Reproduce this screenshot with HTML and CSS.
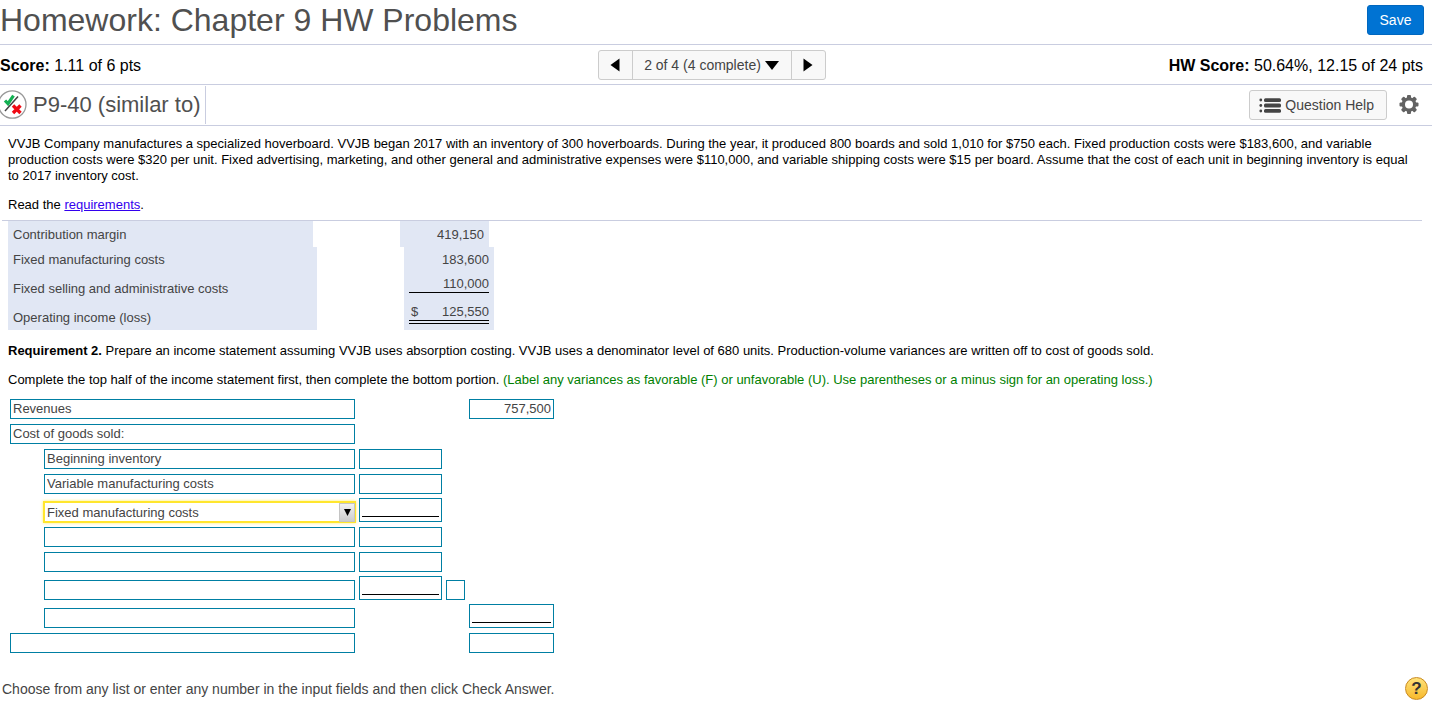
FILE: index.html
```html
<!DOCTYPE html>
<html lang="en">
<head>
<meta charset="utf-8">
<title>Homework: Chapter 9 HW Problems</title>
<link rel="stylesheet" href="styles.css">
</head>
<body>
<header class="title-bar">
  <h1 class="title">Homework: Chapter 9 HW Problems</h1>
  <button class="save" type="button">Save</button>
</header>
<section class="score-bar">
  <p class="score"><b>Score:</b> 1.11 of 6 pts</p>
  <nav class="pager" aria-label="Questions">
    <button class="pager-btn pager-prev" type="button" aria-label="Previous question"><svg width="10" height="14" viewBox="0 0 10 14"><path d="M9.500 0.500v13L0.500 7z"/></svg></button>
    <button class="pager-btn pager-list" type="button">2 of 4 (4 complete)<svg width="14" height="10" viewBox="0 0 14 10"><path d="M0 1h14L7 10z"/></svg></button>
    <button class="pager-btn pager-next" type="button" aria-label="Next question"><svg width="10" height="14" viewBox="0 0 10 14"><path d="M0.500 0.500v13L9.500 7z"/></svg></button>
  </nav>
  <p class="score score-total"><b>HW Score:</b> 50.64%, 12.15 of 24 pts</p>
</section>
<section class="question-bar">
  <div class="question-name">
    <svg class="status" width="27" height="30" viewBox="0 0 27 30" aria-hidden="true">
      <circle cx="12.300" cy="14.500" r="13.700" fill="#fff" stroke="#999" stroke-width="1.300"/>
      <path d="M5 10.500l3 3.200 5.500-8" fill="none" stroke="#14b053" stroke-width="3.200"/>
      <path d="M5 21L18 6.500" stroke="#444" stroke-width="1.500"/>
      <path d="M13 15.500l7.500 7.500M20.500 15.500L13 23" stroke="#f00a14" stroke-width="3.400"/>
    </svg>
    <h2 class="question-title">P9-40 (similar to)</h2>
  </div>
  <div class="question-tools">
    <button class="help" type="button">
      <svg width="22" height="16" viewBox="0 0 22 16" fill="#444" aria-hidden="true">
        <circle cx="1.800" cy="3" r="1.400"/><circle cx="1.800" cy="8.500" r="1.400"/><circle cx="1.800" cy="14" r="1.400"/>
        <rect x="5" y="1.200" width="17" height="3.800" rx="1.500"/><rect x="5" y="6.600" width="17" height="3.800" rx="1.500"/><rect x="5" y="12" width="17" height="3.800" rx="1.500"/>
      </svg>Question Help</button>
    <button class="gear" type="button" aria-label="Settings">
      <svg width="20" height="20" viewBox="0 0 20 20">
        <g fill="#626262"><rect x="8" y="0" width="4" height="19" rx="1"/><rect x="8" y="0" width="4" height="19" rx="1" transform="rotate(45 10 9.500)"/><rect x="8" y="0" width="4" height="19" rx="1" transform="rotate(90 10 9.500)"/><rect x="8" y="0" width="4" height="19" rx="1" transform="rotate(135 10 9.500)"/><circle cx="10" cy="9.500" r="7.300"/></g>
        <circle cx="10" cy="9.500" r="4" fill="#fff"/>
      </svg>
    </button>
  </div>
</section>
<main>
  <section class="problem">
    <p>VVJB Company manufactures a specialized hoverboard. VVJB began 2017 with an inventory of 300 hoverboards. During the year, it produced 800 boards and sold 1,010 for $750 each. Fixed production costs were $183,600, and variable production costs were $320 per unit. Fixed advertising, marketing, and other general and administrative expenses were $110,000, and variable shipping costs were $15 per board. Assume that the cost of each unit in beginning inventory is equal to 2017 inventory cost.</p>
    <p>Read the <a class="link" href="#requirements">requirements</a>.</p>
  </section>
  <section class="work">
    <table class="summary summary-head">
      <tr><th scope="row">Contribution margin</th><td class="blank"></td><td>419,150</td></tr>
    </table>
    <table class="summary summary-body">
      <tr><th scope="row">Fixed manufacturing costs</th><td class="blank"></td><td>183,600</td></tr>
      <tr><th scope="row">Fixed selling and administrative costs</th><td class="blank"></td><td class="subtotal"><div class="amount">110,000</div></td></tr>
      <tr><th scope="row">Operating income (loss)</th><td class="blank"></td><td class="total"><div class="amount"><span>$</span><span>125,550</span></div></td></tr>
    </table>
    <div class="instructions">
      <p><b>Requirement 2.</b> Prepare an income statement assuming VVJB uses absorption costing. VVJB uses a denominator level of 680 units. Production-volume variances are written off to cost of goods sold.</p>
      <p>Complete the top half of the income statement first, then complete the bottom portion. <span class="note">(Label any variances as favorable (F) or unfavorable (U). Use parentheses or a minus sign for an operating loss.)</span></p>
    </div>
    <table class="statement">
      <colgroup><col class="col-label"><col class="col-part"><col class="col-flag"><col class="col-total"></colgroup>
      <tr><td><select class="box" aria-label="Line 1"><option>Revenues</option></select></td><td></td><td></td><td><input class="box number" aria-label="Line 1 total" value="757,500"></td></tr>
      <tr><td><select class="box" aria-label="Line 2"><option>Cost of goods sold:</option></select></td><td></td><td></td><td></td></tr>
      <tr><td class="indent"><select class="box" aria-label="Line 3"><option>Beginning inventory</option></select></td><td><input class="box number" aria-label="Line 3 amount"></td><td></td><td></td></tr>
      <tr><td class="indent"><select class="box" aria-label="Line 4"><option>Variable manufacturing costs</option></select></td><td><input class="box number" aria-label="Line 4 amount"></td><td></td><td></td></tr>
      <tr class="tall"><td class="indent"><div class="active"><select class="box" aria-label="Line 5"><option>Fixed manufacturing costs</option></select><span class="arrow"><svg width="7" height="7" viewBox="0 0 7 7"><path d="M0 0h7L3.500 7z"/></svg></span></div></td><td><div class="ruled"><input class="number" aria-label="Line 5 amount"></div></td><td></td><td></td></tr>
      <tr><td class="indent"><select class="box" aria-label="Line 6"><option></option></select></td><td><input class="box number" aria-label="Line 6 amount"></td><td></td><td></td></tr>
      <tr><td class="indent"><select class="box" aria-label="Line 7"><option></option></select></td><td><input class="box number" aria-label="Line 7 amount"></td><td></td><td></td></tr>
      <tr class="tall"><td class="indent"><select class="box" aria-label="Line 8"><option></option></select></td><td><div class="ruled"><input class="number" aria-label="Line 8 amount"></div></td><td><select class="box" aria-label="Favorable or unfavorable"><option></option></select></td><td></td></tr>
      <tr class="tall"><td class="indent"><select class="box" aria-label="Line 9"><option></option></select></td><td></td><td></td><td><div class="ruled"><input class="number" aria-label="Line 9 total"></div></td></tr>
      <tr><td><select class="box" aria-label="Line 10"><option></option></select></td><td></td><td></td><td><input class="box number" aria-label="Line 10 total"></td></tr>
    </table>
  </section>
</main>
<footer class="footer">
  <p>Choose from any list or enter any number in the input fields and then click Check Answer.</p>
  <button class="hint" type="button" aria-label="Help">?</button>
</footer>
</body>
</html>
```
FILE: styles.css
```css
* { box-sizing: border-box; }
body {
  margin: 0;
  background: #fff;
  color: #000;
  font-family: "Liberation Sans", Arial, sans-serif;
  font-size: 13px;
  line-height: 16px;
}
p, h1, h2 { margin: 0; font-weight: normal; }
button, input, select { font: inherit; color: inherit; margin: 0; }
button { cursor: pointer; }
svg { display: block; }

.title-bar {
  display: flex;
  align-items: center;
  justify-content: space-between;
  padding: 0 8px 4px 0;
  min-height: 45px;
  border-bottom: 1px solid #c9cde0;
}
.title { font-size: 32px; line-height: 40px; color: #505050; }
.save {
  height: 30px;
  width: 57px;
  padding: 0;
  border: 1px solid #0067bf;
  border-radius: 3px;
  background: #0073d3;
  color: #fff;
  font-size: 14px;
}

.score-bar {
  display: grid;
  grid-template-columns: 1fr auto 1fr;
  align-items: center;
  min-height: 40px;
  padding-right: 9px;
  border-bottom: 1px solid #c9cde0;
}
.score { padding-top: 2px; font-size: 16px; line-height: 20px; }
.score-total { text-align: right; }
.pager { display: flex; }
.pager-btn {
  display: flex;
  align-items: center;
  justify-content: center;
  gap: 4px;
  height: 30px;
  width: 35px;
  padding: 0;
  border: 1px solid #ccc;
  background: #f8f8f8;
}
.pager-prev { border-radius: 3px 0 0 3px; }
.pager-next { border-radius: 0 3px 3px 0; }
.pager-list { width: 160px; margin: 0 -1px; color: #444; font-size: 14px; }
.pager-list svg { fill: #000; }

.question-bar {
  display: flex;
  align-items: center;
  justify-content: space-between;
  min-height: 41px;
  border-bottom: 1px solid #c9cde0;
}
.question-name {
  display: flex;
  align-items: center;
  gap: 6px;
  height: 38px;
  padding-right: 5px;
  border-right: 1px solid #c9cde0;
}
.question-title { font-size: 22px; line-height: 28px; color: #505050; }
.question-tools { display: flex; align-items: center; gap: 12px; padding-right: 13px; }
.help {
  display: flex;
  align-items: center;
  gap: 4px;
  height: 30px;
  padding: 0 12px 0 9px;
  border: 1px solid #ccc;
  border-radius: 3px;
  background: #f8f8f8;
  color: #444;
  font-size: 14px;
}
.gear { padding: 0; border: 0; background: none; }

.problem { padding: 10px 16px 7px 8px; }
.problem p + p, .instructions p + p { margin-top: 13px; }
.link { color: #3300ee; }

.work { margin: 0 10px 0 2px; padding-left: 6px; border-top: 1px solid #c9cde0; }

.summary { border-collapse: collapse; table-layout: fixed; color: #444; }
.summary-head { width: 481px; }
.summary-body { width: 486px; }
.summary th, .summary td {
  padding: 6px 5px 4px;
  background: #e1e7f4;
  font-weight: normal;
  vertical-align: bottom;
}
.summary th { text-align: left; }
.summary td { width: 90px; text-align: right; }
.summary-head td { width: 89px; }
.summary-head th { width: 305px; }
.summary-body th { width: 309px; }
.summary .blank { width: 87px; background: none; }
.summary-body th, .summary-body td { padding-top: 5px; }
.amount { display: flex; justify-content: space-between; }
.summary .subtotal { padding: 4px 5px 8px; }
.summary .subtotal .amount { justify-content: flex-end; border-bottom: 1px solid #000; height: 17px; }
.summary .total { padding: 3px 5px 6px; }
.total .amount { border-bottom: 4px double #000; padding-left: 2px; height: 20px; }

.instructions { padding: 13px 0 6px; }
.note { color: #008000; }

.statement { width: 546px; border-collapse: collapse; table-layout: fixed; color: #444; }
.statement td { padding: 5px 0 0 4px; vertical-align: bottom; }
.statement .tall td { padding-top: 4px; }
.statement td:first-child { padding-left: 2px; }
.statement td.indent:first-child { padding-left: 36px; }
.col-label { width: 347px; }
.col-part { width: 87px; }
.col-flag { width: 23px; }
.col-total { width: 89px; }
.box {
  display: block;
  width: 100%;
  height: 20px;
  padding: 0 2px;
  border: 1px solid #007fa3;
  border-radius: 0;
  background: #fff;
  appearance: none;
  outline: 0;
}
.number { text-align: right; }
.box.number { padding-bottom: 2px; }
.ruled { height: 24px; padding: 2px 2px 4px; border: 1px solid #007fa3; }
.ruled input {
  display: block;
  width: 100%;
  height: 16px;
  padding: 0;
  border: 0;
  border-bottom: 1px solid #000;
  background: none;
  outline: 0;
}
.active { position: relative; }
.active .box {
  padding-top: 1px;
  border-color: #ffe62e;
  box-shadow: 0 0 0 1px #ffe62e, 0 0 3px 1px #ffee70;
}
.arrow {
  position: absolute;
  top: 1px;
  right: 0;
  bottom: 0;
  width: 16px;
  display: grid;
  place-items: center;
  border: 1px solid #c4c4c4;
  background: linear-gradient(#f2f2f2, #ccc);
  pointer-events: none;
}

.footer {
  display: flex;
  align-items: center;
  justify-content: space-between;
  padding: 24px 4px 0 2px;
  color: #444;
  font-size: 14px;
}
.hint {
  width: 23px;
  height: 23px;
  padding: 0;
  border: 1px solid #c98a20;
  border-radius: 50%;
  background: linear-gradient(#ffe27a, #f7b92c);
  color: #333;
  font-size: 17px;
  font-weight: bold;
  line-height: 20px;
}
```
